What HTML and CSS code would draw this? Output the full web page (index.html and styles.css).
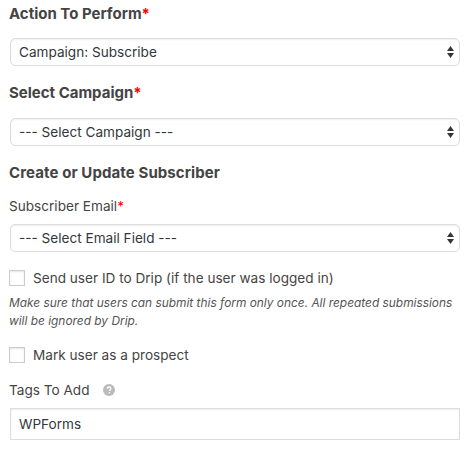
FILE: index.html
```html
<!DOCTYPE html>
<html lang="en">
<head>
    <meta charset="UTF-8">
    <meta name="viewport" content="width=device-width, initial-scale=1.0">
    <title>Drip settings</title>
    <link rel="stylesheet" href="styles.css">
</head>
<body>
    <form class="panel">
        <div class="field action-field">
            <label class="heading">Action To Perform<span class="req">*</span></label>
            <div class="select-box">Campaign: Subscribe<svg class="arrows" viewBox="0 0 7 12"><path d="M3.5 0L7 5H0z"/><path d="M0 7h7l-3.5 5z"/></svg></div>
        </div>
        <div class="field campaign-field">
            <label class="heading">Select Campaign<span class="req">*</span></label>
            <div class="select-box">--- Select Campaign ---<svg class="arrows" viewBox="0 0 7 12"><path d="M3.5 0L7 5H0z"/><path d="M0 7h7l-3.5 5z"/></svg></div>
        </div>
        <h3 class="heading section-title">Create or Update Subscriber</h3>
        <div class="field email-field">
            <label class="plain">Subscriber Email<span class="req">*</span></label>
            <div class="select-box">--- Select Email Field ---<svg class="arrows" viewBox="0 0 7 12"><path d="M3.5 0L7 5H0z"/><path d="M0 7h7l-3.5 5z"/></svg></div>
        </div>
        <label class="check-row first-check"><span class="check"></span>Send user ID to Drip (if the user was logged in)</label>
        <p class="note">Make sure that users can submit this form only once. All repeated submissions will be ignored by Drip.</p>
        <label class="check-row second-check"><span class="check"></span>Mark user as a prospect</label>
        <div class="tags-label"><label class="plain">Tags To Add</label><svg class="help" viewBox="0 0 12 12"><circle cx="6" cy="6" r="6"/><path class="help-mark" d="M4.2 4.7C4.3 3.6 5 3 6 3s1.9.6 1.9 1.6c0 1.3-1.5 1.3-1.5 2.4"/><circle class="help-dot" cx="6.4" cy="8.8" r=".8"/></svg></div>
        <div class="text-box">WPForms</div>
    </form>
</body>
</html>
```

FILE: styles.css
```css
body {
    margin: 0;
    background: #fff;
    font-family: 'Inter', 'Liberation Sans', sans-serif;
    font-size: 13.6px;
    color: #444;
}
.panel {
    padding: 0 13px 0 9px;
}
.heading {
    display: block;
    margin: 0;
    font-size: 15px;
    line-height: 20px;
    font-weight: 700;
    color: #444;
}
.plain {
    display: block;
    line-height: 20px;
}
.req {
    color: #f00;
}
.action-field {
    padding-top: 4px;
}
.select-box {
    display: flex;
    align-items: center;
    justify-content: space-between;
    box-sizing: border-box;
    height: 28px;
    margin: 15px 0 0 1px;
    padding: 0 5px 0 8px;
    background: #fff;
    border: 1px solid #ddd;
    border-radius: 5px;
    box-shadow: inset 0 1px 2px rgba(0, 0, 0, 0.07);
    color: #32373c;
}
.action-field .select-box {
    margin-top: 14px;
}
.arrows {
    width: 7px;
    height: 12px;
    fill: #32373c;
}
.campaign-field {
    padding-top: 17px;
}
.section-title {
    margin-top: 17px;
    letter-spacing: 0.1px;
}
.email-field {
    padding-top: 13px;
}
.email-field .select-box {
    margin-top: 8px;
}
.check-row {
    display: flex;
    align-items: center;
    line-height: 20px;
}
.check {
    box-sizing: border-box;
    width: 16px;
    height: 16px;
    margin-right: 8px;
    background: #fff;
    border: 1px solid #ccc;
    box-shadow: inset 0 1px 2px rgba(0, 0, 0, 0.1);
}
.first-check {
    margin-top: 16px;
}
.note {
    margin: 6px 0 0;
    font-size: 11.9px;
    line-height: 18px;
    font-style: italic;
    color: #555;
}
.second-check {
    margin-top: 15px;
}
.tags-label {
    display: flex;
    align-items: center;
    gap: 14px;
    margin-top: 15px;
}
.help {
    width: 12px;
    height: 12px;
    fill: #bbb;
}
.help-mark {
    fill: none;
    stroke: #fff;
    stroke-width: 1.3;
}
.help-dot {
    fill: #fff;
}
.text-box {
    box-sizing: border-box;
    height: 32px;
    margin: 8px 0 0 1px;
    padding: 0 8px;
    border: 1px solid #ddd;
    box-shadow: inset 0 1px 2px rgba(0, 0, 0, 0.07);
    line-height: 30px;
    color: #32373c;
}
```
